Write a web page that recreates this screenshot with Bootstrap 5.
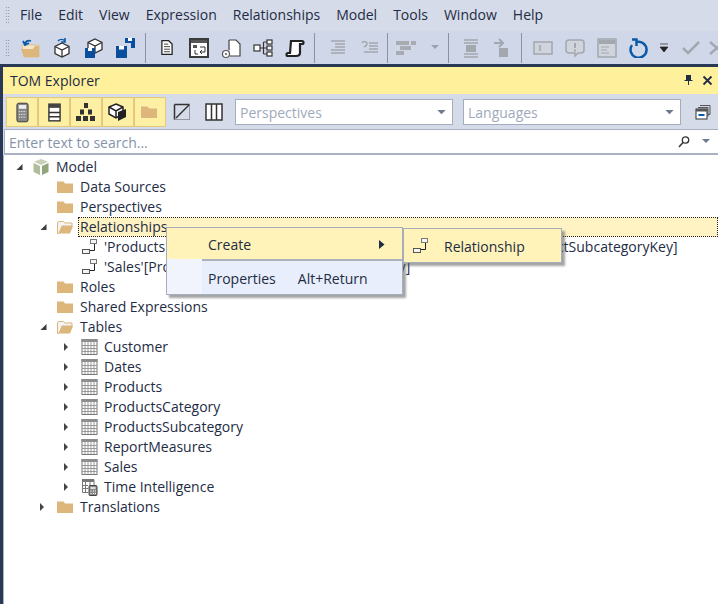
<!DOCTYPE html>
<html lang="en"><head><meta charset="utf-8"><title>TOM Explorer</title>
<link rel="stylesheet" href="https://cdn.jsdelivr.net/npm/bootstrap@5.3.0/dist/css/bootstrap.min.css">
<style>
html,body{height:100%;overflow:hidden}
body{font-family:"Open Sans","Noto Sans",sans-serif;font-size:14px;color:#1e2c44;background:#d6dbe9;width:718px;height:604px;display:flex;flex-direction:column;position:relative}
svg{display:block;flex:none}
.menu-bar{height:31px;padding:0 0 2px 5px;background:#d6dbe9}
.grip{width:5px;flex:none;background-image:radial-gradient(#7d869b 0.7px,transparent 0.8px);background-size:2.5px 3px}
.menu-grip{height:18px;margin-right:2px}
.menu-item{padding:0 8px;white-space:nowrap}
.tool-bar{height:33px;padding-left:5px;background:#d0d7e8;overflow:hidden}
.tool-grip{height:18px;margin-right:4px}
.tb{width:32px;height:32px;display:flex;align-items:center;justify-content:center;flex:none}
.tsep{width:1px;height:30px;background:#8b93a3;flex:none}
.s1{margin:0 5px 0 3px}.s2{margin:0 6px 0 3px}.s3{margin:0 2px}.s4{margin:0 6px 0 0}.s5{margin:0 5px 0 4px}
.pull{margin-left:-2px}.pull2{margin-left:-5px}.push{margin-left:2px}
.tcaret{width:26px}.tcaret2{width:18px}
.win{flex:1;display:flex;flex-direction:column;min-height:0;border-top:3px solid #293955;border-left:3px solid #293955;background:#d6dbe9;position:relative}
.title-bar{height:27px;background:#fff09c;padding:0 5px 1px 7px;flex:none}
.title-btns{margin-left:auto}
.panel-tools{height:35px;padding:3px 0 0 3px;flex:none}
.tgroup{display:flex;flex:none;border:1px solid #e5c87a;background:#fdf0a5;height:30px}
.tgroup .tb{width:32px;height:28px;border-right:2px solid #e5c87a}
.tgroup .tb:last-child{border-right:0;width:30px}
.plain{width:32px;height:30px;display:flex;flex:none;align-items:center;justify-content:center}
.combo{width:218px;height:26px;flex:none;margin-top:2px;background:#fff;border:1px solid #a3adbf;color:#a0a9bb;padding:0 6px 0 4px;margin-left:5px}
.combo+.combo{margin-left:10px}
.plain-c{width:30px;height:26px;margin:2px 0 0 7px}
.search{height:26px;margin-left:1px;background:#fff;border:1px solid #a9b2c3;border-right:0;border-bottom:2px solid #a9b2c3;color:#8593aa;padding:0 8px 0 4px;flex:none}
.search-txt{padding-top:2px}
.tree{flex:1;background:#fff;padding-top:2px;position:relative;border-left:1px solid #a9b2c3;min-height:0}
.row-t{height:20px;display:flex;align-items:center;color:#1e2c44;white-space:nowrap}
.lv0{padding-left:7px}.lv1{padding-left:31px}.lv2{padding-left:55px}
.cr{width:22px;height:12px;flex:none}
.ic{width:18px;height:18px;flex:none;margin-right:3px}
.lab{padding:0 2px;line-height:18px}
.lab-rel{word-spacing:5px}
.sel{flex:1;background:#fff3c3;border:1px dotted #222;height:20px;padding-left:1px}
.ctx{position:absolute;background:#e9effb;border:1px solid #a6adbb;box-shadow:3px 3px 2px rgba(90,90,90,.55)}
.ctx-main{left:162px;top:72px;width:237px;height:68px}
.ctx-sub{left:399px;top:73px;width:159px;height:35px;background:#fff3b9;display:flex;align-items:center;padding-left:8px}
.c-create{height:31px;background:#fff3b9;display:flex;align-items:center;padding:1px 17px 0 41px}
.c-props{height:35px;display:flex;align-items:center;padding:3px 0 0 41px;background:linear-gradient(90deg,#f1f4fc 35px,#e8eefb 35px);position:relative;white-space:nowrap}
.c-sep{position:absolute;top:0;left:35px;right:0;height:2px;background:#acb2bf}
.c-accel{margin-left:22px}
.sub-ic{margin-right:14px}
.sub-txt{padding-top:2px}
.search-ic{margin-right:11px}
</style></head><body>
<svg width="0" height="0" class="position-absolute">
<defs>
<symbol id="folder" viewBox="0 0 18 18"><path d="M0 3.500h6.500l1.500 2h8V15H0z" fill="#dcb67a"/></symbol>
<symbol id="ofolder" viewBox="0 0 18 18"><path d="M.5 5l1-1.500h5l1.500 1.500h7v3H5L2 15.500H.5z" fill="#f4f4f4" stroke="#dcb67a"/><path d="M2 15.500 5 8h11l-3 7.500z" fill="#dcb67a"/></symbol>
<symbol id="rel" viewBox="0 0 18 18"><g fill="#f4f4f4" stroke="#555"><rect x="9.500" y="1.500" width="6" height="4" stroke="#777"/><rect x="1.500" y="11.500" width="7" height="4"/></g><path d="M13.500 6v6.500H9" fill="none" stroke="#222"/></symbol>
<symbol id="tbl" viewBox="0 0 18 18"><rect x="1" y="1.500" width="15" height="15" fill="#fff" stroke="#777"/><rect x=".5" y="1" width="16" height="3" fill="#8c8c8c"/><path d="M1 7.500h15M1 10.500h15M1 13.500h15M4 3v13M7 3v13M10 3v13M13 3v13" stroke="#999" fill="none"/></symbol>
<symbol id="timetbl" viewBox="0 0 18 18"><rect x="1" y="1" width="12" height="3" fill="#777"/><path d="M1.500 4v10.500H7M1.500 7.500H7M1.500 10.500H7M4.500 4v10M9 4V7M13 1.500V7" stroke="#777" fill="none"/><rect x="8" y="7.500" width="8" height="10" rx="1" fill="#8a8a8a" stroke="#444"/><rect x="9.500" y="9" width="5" height="2" fill="#ddd"/><path d="M9.500 13h1M12 13h1M14 13h1M9.500 15.500h1M12 15.500h1M14 15.500h1" stroke="#fff"/></symbol>
<symbol id="dd" viewBox="0 0 10 6"><path d="M0 0h10L5 5z" fill="#6d7a90"/></symbol>
<symbol id="open" viewBox="0 0 22 12"><path d="M11.500 3v6h-6z" fill="#3d3d3d"/></symbol>
<symbol id="closed" viewBox="0 0 22 12"><path d="M5 2l4 4-4 4z" fill="#444"/></symbol>
</defs>
</svg>

<div class="menu-bar d-flex align-items-center">
  <div class="grip menu-grip"></div>
  <div class="menu-item">File</div><div class="menu-item">Edit</div><div class="menu-item">View</div><div class="menu-item">Expression</div><div class="menu-item">Relationships</div><div class="menu-item">Model</div><div class="menu-item">Tools</div><div class="menu-item">Window</div><div class="menu-item">Help</div>
</div>

<div class="tool-bar d-flex align-items-center">
  <div class="grip tool-grip"></div>
  <div class="tb"><svg width="22" height="22" viewBox="0 0 22 22"><path d="M3 8h17v12H5z" fill="#f5e6c8" stroke="#d8c296"/><path d="M5 20 2 12h12l2-3h4v11z" fill="#dcb67a"/><path d="M6 8c0-4 3-5 6-4M4 4l2 4 4-2" fill="none" stroke="#0a5aa8" stroke-width="1.800"/></svg></div>
  <div class="tb"><svg width="22" height="22" viewBox="0 0 22 22"><path d="M11 6l7 3.500v7L11 20l-7-3.500v-7z" fill="#fff" stroke="#333" stroke-width="1.300"/><path d="M4 9.500l7 3.500 7-3.500M11 13v7" fill="none" stroke="#333" stroke-width="1.300"/><path d="M7 4c2-2 5-2 7 0M14 1v4h-4" fill="none" stroke="#0a5aa8" stroke-width="1.500"/></svg></div>
  <div class="tb"><svg width="22" height="22" viewBox="0 0 22 22"><path d="M12 2l7 3.500v7L12 16 5 12.500v-7z" fill="#fff" stroke="#333" stroke-width="1.300"/><path d="M5 5.500 12 9l7-3.500M12 9v7" fill="none" stroke="#333" stroke-width="1.300"/><path d="M2 11h10v10H2z" fill="#0a4f9e"/><rect x="5" y="11" width="4" height="3" fill="#fff"/></svg></div>
  <div class="tb"><svg width="22" height="22" viewBox="0 0 22 22"><path d="M10 1h10v10h-4V6h-6z" fill="#0a4f9e"/><rect x="13" y="1" width="4" height="3" fill="#fff"/><path d="M1 9h11v12H1z" fill="#0a4f9e"/><rect x="4" y="9" width="5" height="3.500" fill="#fff"/></svg></div>
  <div class="tsep s1"></div>
  <div class="tb"><svg width="14" height="17" viewBox="0 0 16 20"><path d="M2 2h8l4 4v12H2z" fill="#fff" stroke="#222" stroke-width="1.500"/><path d="M4.500 6h5M4.500 9h7M4.500 12h7M4.500 15h7" stroke="#222"/></svg></div>
  <div class="tb"><svg width="20" height="20" viewBox="0 0 20 20"><rect x="1" y="1" width="18" height="18" fill="#fff" stroke="#3b3b3b" stroke-width="2"/><rect x="2" y="2" width="16" height="3" fill="#555"/><rect x="4" y="7" width="4" height="3" fill="#555"/><path d="M11 9h5v5h-4M13 12l-2 2 2 2M6 12v4h3" fill="none" stroke="#333"/></svg></div>
  <div class="tb"><svg width="22" height="22" viewBox="0 0 22 22"><path d="M9 3h7l4 4v12H10" fill="#fff" stroke="#444" stroke-width="1.200"/><path d="M9 3v10" stroke="#444" stroke-width="1.200"/><circle cx="6" cy="17" r="3.500" fill="#fff" stroke="#555" stroke-width="1.200"/><circle cx="6" cy="17" r="1" fill="#555"/></svg></div>
  <div class="tb"><svg width="20" height="18" viewBox="0 0 20 18"><rect x="1" y="6" width="6" height="6" fill="#fff" stroke="#333" stroke-width="1.200"/><rect x="14" y="1" width="5" height="4" fill="#fff" stroke="#333" stroke-width="1.200"/><rect x="14" y="7" width="5" height="4" fill="#fff" stroke="#333" stroke-width="1.200"/><rect x="14" y="13" width="5" height="4" fill="#fff" stroke="#333" stroke-width="1.200"/><path d="M7 9h7M10.500 3v12M10.500 3H14M10.500 15H14" fill="none" stroke="#333" stroke-width="1.200"/></svg></div>
  <div class="tb"><svg width="20" height="20" viewBox="0 0 20 20"><path d="M6 3h11c2 0 2 3 0 3h-2v9c0 2-2 3-4 3H3c-2 0-2-3 0-3h2z" fill="#fff" stroke="#222" stroke-width="2.200"/></svg></div>
  <div class="tsep s2"></div>
  <div class="tb"><svg width="18" height="16" viewBox="0 0 18 16"><path d="M3 1h14M7 4h10M7 7h10M3 10h14M3 13h14" stroke="#a3a7ae" stroke-width="1.500"/></svg></div>
  <div class="tb"><svg width="20" height="16" viewBox="0 0 20 16"><path d="M3 3c1-2 5-2 5 1 0 2-2 2-3 3M10 3h9M10 6h9M10 9h9M5 12h14" stroke="#a3a7ae" stroke-width="1.500" fill="none"/></svg></div>
  <div class="tsep s3"></div>
  <div class="tb"><svg width="22" height="18" viewBox="0 0 22 18"><rect x="1" y="2" width="13" height="4" fill="#a8abb2"/><rect x="16" y="2" width="5" height="4" fill="#a8abb2"/><rect x="5" y="7" width="11" height="4" fill="#a8abb2"/><rect x="1" y="12" width="8" height="4" fill="#a8abb2"/></svg></div>
  <div class="tb tcaret"><svg width="8" height="5" viewBox="0 0 10 6"><path d="M0 0h10L5 5z" fill="#9ca3b0"/></svg></div>
  <div class="tsep s4"></div>
  <div class="tb"><svg width="16" height="20" viewBox="0 0 16 20"><path d="M1 2h14M1 5h14M1 16h14M1 19h14" stroke="#a3a7ae" stroke-width="1.500"/><rect x="3" y="7" width="10" height="7" fill="#a3a7ae"/></svg></div>
  <div class="tb pull"><svg width="16" height="20" viewBox="0 0 16 20"><path d="M1 5h8M6 1l4 4-4 4" fill="none" stroke="#a3a7ae" stroke-width="2"/><rect x="6" y="10" width="9" height="9" fill="#a3a7ae"/></svg></div>
  <div class="tsep s5"></div>
  <div class="tb"><svg width="20" height="16" viewBox="0 0 20 16"><rect x="1" y="2" width="18" height="12" fill="#d0d4dc" stroke="#a3a7ae" stroke-width="1.500"/><path d="M6 5c1 1 1 5 0 6M8 5c-1 1-1 5 0 6" stroke="#a3a7ae" fill="none"/></svg></div>
  <div class="tb"><svg width="20" height="20" viewBox="0 0 20 20"><path d="M4 2h12c2 0 3 1 3 3v7c0 2-1 3-3 3h-3l-3 3v-3H4c-2 0-3-1-3-3V5c0-2 1-3 3-3z" fill="#d0d4dc" stroke="#a3a7ae" stroke-width="1.500"/><path d="M10 5v5M10 11.500v2" stroke="#a3a7ae" stroke-width="2"/></svg></div>
  <div class="tb"><svg width="20" height="20" viewBox="0 0 20 20"><rect x="1" y="1" width="18" height="18" fill="#d0d4dc" stroke="#a3a7ae" stroke-width="1.500"/><rect x="2" y="2" width="16" height="4" fill="#a3a7ae"/><path d="M4 9h8M4 12h6M4 15h8" stroke="#a3a7ae"/></svg></div>
  <div class="tb"><svg width="20" height="20" viewBox="0 0 20 20"><path d="M3 1.500h4.500V8M7 4.100a8 8 0 1 1-4 3" fill="none" stroke="#0a5aa8" stroke-width="2.500"/></svg></div>
  <div class="tb tcaret2"><svg width="8" height="10" viewBox="0 0 8 10"><path d="M0 1h8M0 4h8L4 9z" fill="#222" stroke="#222" stroke-width=".7"/></svg></div>
  <div class="tb push"><svg width="18" height="14" viewBox="0 0 18 14"><path d="M1 7l5 5L17 1" fill="none" stroke="#a3a7ae" stroke-width="2.500"/></svg></div>
  <div class="tb pull2"><svg width="18" height="14" viewBox="0 0 18 14"><path d="M1 1l14 12M15 1 1 13" fill="none" stroke="#a3a7ae" stroke-width="2.500"/></svg></div>
</div>

<div class="win">
  <div class="title-bar d-flex align-items-center">TOM Explorer
    <div class="title-btns d-flex align-items-center gap-2">
      <svg width="11" height="12" viewBox="0 0 11 12"><path d="M3 1h5v5h1.500v1H6v4H5V7H1.500V6H3z" fill="#1e2c44"/></svg>
      <svg width="11" height="11" viewBox="0 0 11 11"><path d="M1.500 1.500l8 8M9.500 1.500l-8 8" stroke="#1e2c44" stroke-width="1.800"/></svg>
    </div>
  </div>
  <div class="panel-tools d-flex align-items-start">
    <div class="tgroup">
      <div class="tb"><svg width="13" height="21" viewBox="0 0 14 22"><rect x="1" y="1" width="12" height="20" rx="2" fill="#888" stroke="#333"/><rect x="3" y="3" width="8" height="4" fill="#eee"/><path d="M3 10h8M3 13h8M3 16h8" stroke="#eee" stroke-dasharray="1.500 1"/></svg></div>
      <div class="tb"><svg width="13" height="19" viewBox="0 0 14 20"><rect x="1" y="1" width="12" height="18" fill="#fff" stroke="#333" stroke-width="1.500"/><rect x="1" y="1" width="12" height="4" fill="#444"/><path d="M1 10h12M1 14.500h12" stroke="#333" stroke-width="1.500"/></svg></div>
      <div class="tb"><svg width="20" height="20" viewBox="0 0 20 20"><path d="M8 1h4v5H8zM4 7.500h4v5H4zM12 7.500h4v5h-4zM0 14h5v5H0zM7 14h5v5H7zM14 14h5v5h-5z" fill="#333"/></svg></div>
      <div class="tb"><svg width="20" height="20" viewBox="0 0 20 20"><path d="M8 2l7 3v7l-7 4-7-4V5z" fill="#fff" stroke="#222" stroke-width="1.500"/><path d="M1 5l7 4 7-4M8 9v7" fill="none" stroke="#222" stroke-width="1.500"/><path d="M10 10l8-3v8l-8 4z" fill="#222"/></svg></div>
      <div class="tb"><svg width="18" height="18"><use href="#folder"/></svg></div>
    </div>
    <div class="plain"><svg width="18" height="18" viewBox="0 0 18 18"><path d="M1.500 1.500h15M1.500 1.500v15" stroke="#333" fill="none" stroke-width="1.500"/><path d="M16.500 1.500v15h-15" stroke="#555" stroke-dasharray="1 1" fill="none"/><path d="M3 15 16 2" stroke="#333" stroke-width="1.500"/></svg></div>
    <div class="plain"><svg width="18" height="18" viewBox="0 0 18 18"><rect x="1" y="1" width="16" height="16" fill="#fff" stroke="#333" stroke-width="1.500"/><path d="M6.500 1v16M11.500 1v16" stroke="#333" stroke-width="1.500"/></svg></div>
    <div class="combo d-flex align-items-center justify-content-between"><span>Perspectives</span><svg width="9" height="5"><use href="#dd"/></svg></div>
    <div class="combo d-flex align-items-center justify-content-between"><span>Languages</span><svg width="9" height="5"><use href="#dd"/></svg></div>
    <div class="plain plain-c"><svg width="16" height="16" viewBox="0 0 16 16"><path d="M5 1.500h10v9h-2M3 3.500h10v9" fill="none" stroke="#555"/><rect x="1" y="5" width="11" height="10" fill="#fff" stroke="#333"/><rect x="1" y="5" width="11" height="2.500" fill="#555"/><path d="M3.500 11h6" stroke="#0a5aa8" stroke-width="2"/></svg></div>
  </div>
  <div class="search d-flex align-items-center"><span class="search-txt">Enter text to search...</span>
    <svg class="ms-auto search-ic" width="14" height="14" viewBox="0 0 14 14"><circle cx="8.500" cy="5" r="3.200" fill="none" stroke="#333" stroke-width="1.300"/><path d="M6 7.500 2 12" stroke="#333" stroke-width="1.500"/></svg>
    <svg width="8" height="5"><use href="#dd"/></svg>
  </div>
  <div class="tree">
    <div class="row-t lv0"><svg class="cr"><use href="#open"/></svg><svg class="ic" viewBox="0 0 18 18"><path d="M8 1l7 2.800-7 3.200-7-3.200z" fill="#c8d0b8"/><path d="M.5 5l6.500 3v9L.5 14z" fill="#b0bd9a"/><path d="M9 8l6.500-3v9L9 17z" fill="#93a57c"/></svg><span class="lab">Model</span></div>
    <div class="row-t lv1"><span class="cr"></span><svg class="ic"><use href="#folder"/></svg><span class="lab">Data Sources</span></div>
    <div class="row-t lv1"><span class="cr"></span><svg class="ic"><use href="#folder"/></svg><span class="lab">Perspectives</span></div>
    <div class="row-t lv1"><svg class="cr"><use href="#open"/></svg><svg class="ic"><use href="#ofolder"/></svg><span class="lab sel">Relationships</span></div>
    <div class="row-t lv2"><span class="cr"></span><svg class="ic"><use href="#rel"/></svg><span class="lab lab-rel">'Products'[ProductSubcategoryKey] --&gt; 'ProductsSubcategory'[ProductSubcategoryKey]</span></div>
    <div class="row-t lv2"><span class="cr"></span><svg class="ic"><use href="#rel"/></svg><span class="lab lab-rel">'Sales'[ProductKey] --&gt; 'Products'[ProductKey]</span></div>
    <div class="row-t lv1"><span class="cr"></span><svg class="ic"><use href="#folder"/></svg><span class="lab">Roles</span></div>
    <div class="row-t lv1"><span class="cr"></span><svg class="ic"><use href="#folder"/></svg><span class="lab">Shared Expressions</span></div>
    <div class="row-t lv1"><svg class="cr"><use href="#open"/></svg><svg class="ic"><use href="#ofolder"/></svg><span class="lab">Tables</span></div>
    <div class="row-t lv2"><svg class="cr"><use href="#closed"/></svg><svg class="ic"><use href="#tbl"/></svg><span class="lab">Customer</span></div>
    <div class="row-t lv2"><svg class="cr"><use href="#closed"/></svg><svg class="ic"><use href="#tbl"/></svg><span class="lab">Dates</span></div>
    <div class="row-t lv2"><svg class="cr"><use href="#closed"/></svg><svg class="ic"><use href="#tbl"/></svg><span class="lab">Products</span></div>
    <div class="row-t lv2"><svg class="cr"><use href="#closed"/></svg><svg class="ic"><use href="#tbl"/></svg><span class="lab">ProductsCategory</span></div>
    <div class="row-t lv2"><svg class="cr"><use href="#closed"/></svg><svg class="ic"><use href="#tbl"/></svg><span class="lab">ProductsSubcategory</span></div>
    <div class="row-t lv2"><svg class="cr"><use href="#closed"/></svg><svg class="ic"><use href="#tbl"/></svg><span class="lab">ReportMeasures</span></div>
    <div class="row-t lv2"><svg class="cr"><use href="#closed"/></svg><svg class="ic"><use href="#tbl"/></svg><span class="lab">Sales</span></div>
    <div class="row-t lv2"><svg class="cr"><use href="#closed"/></svg><svg class="ic"><use href="#timetbl"/></svg><span class="lab">Time Intelligence</span></div>
    <div class="row-t lv1"><svg class="cr"><use href="#closed"/></svg><svg class="ic"><use href="#folder"/></svg><span class="lab">Translations</span></div>

    <div class="ctx ctx-main">
      <div class="c-create"><span class="flex-grow-1">Create</span><svg width="6" height="9" viewBox="0 0 6 9"><path d="M0 0l5.500 4.500L0 9z" fill="#1e2c44"/></svg></div>
      <div class="c-props"><div class="c-sep"></div><span>Properties</span><span class="c-accel">Alt+Return</span></div>
    </div>
    <div class="ctx ctx-sub"><svg class="sub-ic" width="18" height="18"><use href="#rel"/></svg><span class="sub-txt">Relationship</span></div>
  </div>
</div>
</body></html>
